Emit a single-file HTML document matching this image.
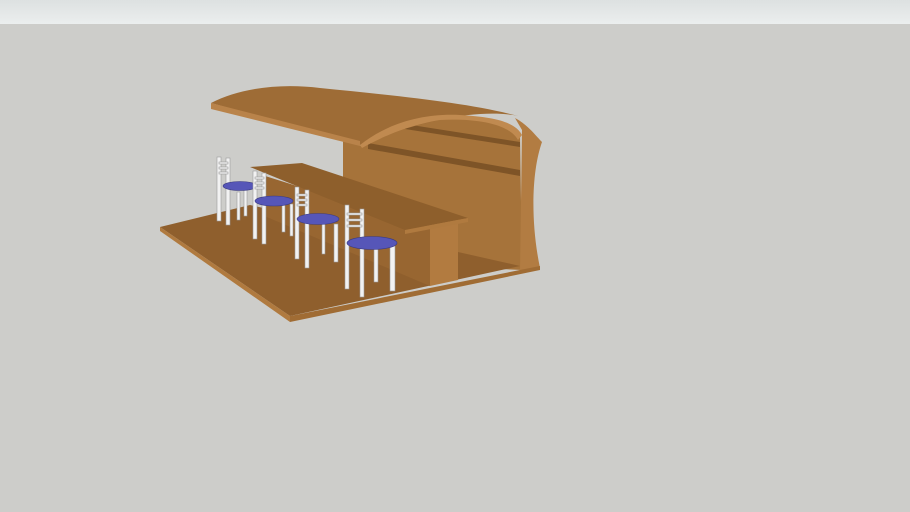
<!DOCTYPE html>
<html><head><meta charset="utf-8"><style>
html,body{margin:0;padding:0;width:910px;height:512px;overflow:hidden;background:#cdcdca}
.top{position:absolute;left:0;top:0;width:910px;height:24px;background:linear-gradient(#dde1e1,#ebeeee)}
svg{position:absolute;left:0;top:0}
</style></head><body>
<div class="top"></div>
<svg width="910" height="512" viewBox="0 0 910 512">
<!-- back wall -->
<path d="M343,140 L362,146 C385,126 420,114 460,116 C495,118 515,123 520,133 L522,270 L343,262 Z" fill="#a6733a"/>
<!-- right curved side -->
<path d="M515,118 C528,125 535,135 542,142 C532,170 530,220 540,268 L520,272 L522,130 Z" fill="#b27c42"/>
<!-- shelves -->
<polygon points="368,143 520,170 520,176 368,149" fill="#7e5427"/>
<polygon points="405,124 520,142 520,147 405,129" fill="#7e5427"/>
<!-- floor -->
<polygon points="160,227 250,205 520,266 290,316" fill="#8f5f2d"/>
<polygon points="160,227 290,316 290,322 160,231" fill="#b07a3f"/>
<polygon points="290,316 540,266 540,270 290,322" fill="#a06c34"/>
<!-- counter body -->
<polygon points="262,175 430,228 430,286 262,215" fill="#986631"/>
<polygon points="430,222 458,218 458,280 430,286" fill="#b27b40"/>
<!-- counter top -->
<polygon points="250,167 302,163 468,218 405,230" fill="#8e5f2c"/>
<polygon points="405,230 468,218 468,222 405,234" fill="#b07a3f"/>
<!-- roof -->
<path d="M211,103 C240,88 280,83 320,88 C400,96 470,103 518,116 C500,112 470,113 440,120 C400,128 375,140 360,145 Z" fill="#9e6c36"/>
<polygon points="211,103 360,141 360,146 211,109" fill="#b9834a"/>
<path d="M360,145 C385,125 420,113 460,115 C495,117 515,122 522,135 L518,140 C510,125 480,118 440,120 C405,126 380,138 362,148 Z" fill="#c08a50"/>
<!-- chairs -->
<g fill="#f2f2f2" stroke="#9a9a9a" stroke-width="0.6">
<g>
<rect x="217" y="157" width="4" height="64"/><rect x="226" y="158" width="4" height="67"/>
<rect x="219" y="162" width="9" height="2"/><rect x="219" y="167" width="9" height="2"/><rect x="219" y="172" width="9" height="2"/>
<rect x="244" y="190" width="3" height="26"/><rect x="237" y="192" width="3" height="28"/>
<ellipse cx="240" cy="186" rx="17" ry="4.5" fill="#5656b8" stroke="#3a3a80"/>
</g>
<g>
<rect x="253" y="171" width="4" height="68"/><rect x="262" y="173" width="4" height="71"/>
<rect x="255" y="177" width="9" height="2"/><rect x="255" y="182" width="9" height="2"/><rect x="255" y="187" width="9" height="2"/>
<rect x="282" y="204" width="3" height="28"/><rect x="290" y="204" width="3" height="32"/>
<ellipse cx="274" cy="201" rx="19" ry="5" fill="#5656b8" stroke="#3a3a80"/>
</g>
<g>
<rect x="295" y="187" width="4" height="72"/><rect x="305" y="190" width="4" height="78"/>
<rect x="297" y="194" width="10" height="2"/><rect x="297" y="199" width="10" height="2"/><rect x="297" y="204" width="10" height="2"/>
<rect x="322" y="224" width="3" height="30"/><rect x="334" y="224" width="4" height="38"/>
<ellipse cx="318" cy="219" rx="21" ry="5.5" fill="#5656b8" stroke="#3a3a80"/>
</g>
<g>
<rect x="345" y="205" width="4" height="84"/><rect x="360" y="209" width="4" height="88"/>
<rect x="347" y="213" width="15" height="2"/><rect x="347" y="219" width="15" height="2"/><rect x="347" y="225" width="15" height="2"/>
<rect x="374" y="248" width="4" height="34"/><rect x="390" y="246" width="5" height="45"/>
<ellipse cx="372" cy="243" rx="25" ry="6.5" fill="#5656b8" stroke="#3a3a80"/>
</g>
</g>
</svg>
</body></html>
